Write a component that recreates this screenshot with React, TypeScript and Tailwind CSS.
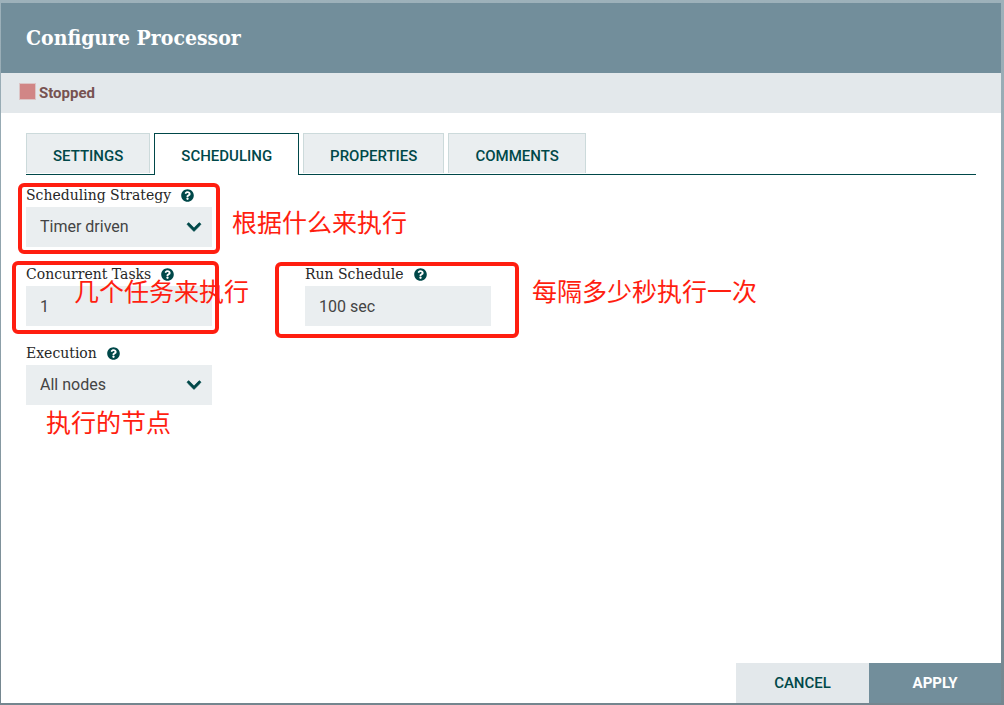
import React, { useState } from 'react';
import { FaChevronDown, FaQuestionCircle } from 'react-icons/fa';

const tabs = ['Settings', 'Scheduling', 'Properties', 'Comments'];

function FieldLabel({ id, children }: { id: string; children: React.ReactNode }) {
  return (
    <div className="flex h-6 items-center gap-[10px]">
      <label htmlFor={id} className="font-['Roboto_Slab','DejaVu_Serif',serif] text-sm whitespace-nowrap text-[#262626]">
        {children}
      </label>
      <FaQuestionCircle className="size-[13px] text-[#004849]" />
    </div>
  );
}

function SelectField({ id, label, options }: { id: string; label: string; options: string[] }) {
  return (
    <div>
      <FieldLabel id={id}>{label}</FieldLabel>
      <div className="grid items-center">
        <select
          id={id}
          className="col-start-1 row-start-1 h-10 w-full appearance-none bg-[#eaeef0] px-[14px] text-base text-[#444] outline-none"
        >
          {options.map((option) => (
            <option key={option}>{option}</option>
          ))}
        </select>
        {/* stroke thickens the chevron a little */}
        <FaChevronDown
          stroke="currentColor"
          strokeWidth={24}
          className="pointer-events-none col-start-1 row-start-1 mr-[10px] size-4 justify-self-end text-[#004849]"
        />
      </div>
    </div>
  );
}

function TextField({ id, label, value }: { id: string; label: string; value: string }) {
  return (
    <div>
      <FieldLabel id={id}>{label}</FieldLabel>
      <input
        id={id}
        type="text"
        defaultValue={value}
        className="block h-10 w-full bg-[#eaeef0] px-[14px] text-base text-[#444] outline-none"
      />
    </div>
  );
}

// Red marker box drawn over a field
function Marker({ className }: { className: string }) {
  return <div className={`pointer-events-none absolute rounded-md border-4 border-[#ff1e10] ${className}`} />;
}

function Note({ className, children }: { className: string; children: React.ReactNode }) {
  return (
    <p
      className={`pointer-events-none absolute font-['Noto_Sans_CJK_SC',sans-serif] text-[25px] leading-8 whitespace-nowrap text-[#ff1e10] ${className}`}
    >
      {children}
    </p>
  );
}

export default function App() {
  const [active, setActive] = useState('Scheduling');

  return (
    <div className="flex min-h-screen bg-linear-to-b from-[#9db1ba] via-[#8c9fa8] to-[#74868f] pt-[3px] pr-[3px] pb-[2px] pl-px font-['Roboto',sans-serif]">
      <div className="flex flex-1 flex-col bg-white">
        <header className="flex h-[70px] items-center bg-[#728e9b] px-[25px]">
          <h1 className="font-['Roboto_Slab','DejaVu_Serif_Condensed','DejaVu_Serif',serif] text-[21px] font-bold text-white">
            Configure Processor
          </h1>
        </header>

        <div className="flex h-10 items-center gap-[3px] bg-[#e3e8eb] px-[18px]">
          <span className="mb-1 size-[17px] border border-[#dcc5c6] bg-[#d18686]" />
          <span className="text-[15px] font-bold text-[#775351]">Stopped</span>
        </div>

        <main className="flex-1 px-[25px] pt-5">
          <div role="tablist" className="flex h-[42px] gap-1 border-b border-[#004849]">
            {tabs.map((tab) => (
              <button
                key={tab}
                type="button"
                role="tab"
                aria-selected={tab === active}
                onClick={() => setActive(tab)}
                className={
                  tab === active
                    ? '-mb-px h-[42px] border border-b-0 border-[#004849] bg-white px-[26px] pt-1 text-[15px] font-medium text-[#004849] uppercase'
                    : 'h-10 border border-b-0 border-[#ccdadb] bg-[#eaeef0] px-[26px] pt-1.5 text-[15px] font-medium text-[#004849] uppercase'
                }
              >
                {tab}
              </button>
            ))}
          </div>

          <form className="grid grid-cols-[186px_186px] gap-x-[93px] gap-y-[15px] pt-2">
            <div className="relative col-span-2 w-[186px]">
              <SelectField id="strategy" label="Scheduling Strategy" options={['Timer driven', 'CRON driven']} />
              <Marker className="-inset-x-2 top-0 -bottom-[7px]" />
              <Note className="top-[22px] left-[206px]">根据什么来执行</Note>
            </div>
            <div className="relative">
              <TextField id="tasks" label="Concurrent Tasks" value="1" />
              <Marker className="-top-px -right-[7px] -bottom-2 -left-[14px]" />
              <Note className="top-3 left-12">几个任务来执行</Note>
            </div>
            <div className="relative">
              <TextField id="schedule" label="Run Schedule" value="100 sec" />
              <Marker className="top-0 -right-7 -bottom-3 -left-[30px]" />
              <Note className="top-3 left-[227px]">每隔多少秒执行一次</Note>
            </div>
            <div className="relative col-span-2 w-[186px]">
              <SelectField id="execution" label="Execution" options={['All nodes', 'Primary node']} />
              <Note className="top-16 left-5">执行的节点</Note>
            </div>
          </form>
        </main>

        <footer className="flex h-10 justify-end text-[15px] font-medium">
          <button type="button" className="w-[133px] bg-[#e3e8eb] text-[#004849]">
            CANCEL
          </button>
          <button type="button" className="w-[132px] bg-[#728e9b] font-bold text-white">
            APPLY
          </button>
        </footer>
      </div>
    </div>
  );
}
